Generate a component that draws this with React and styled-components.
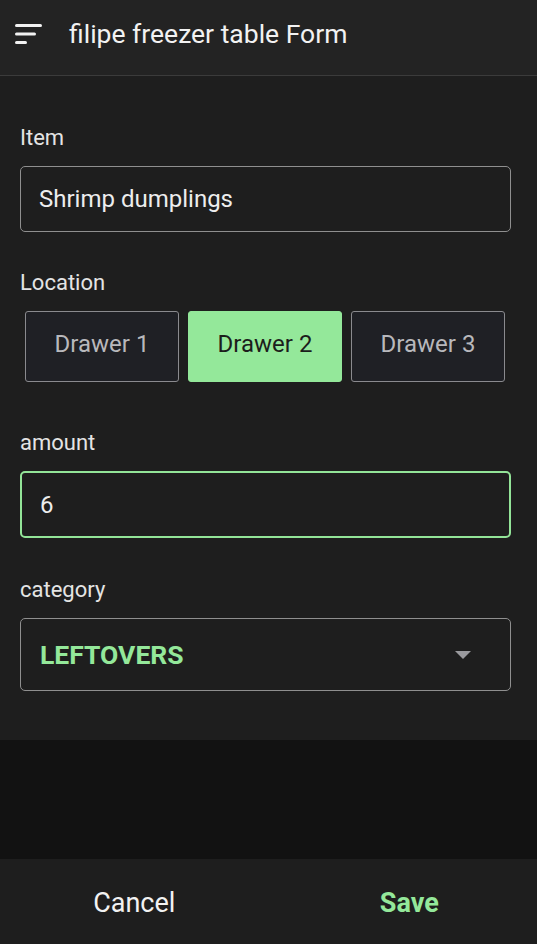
import React, { useState } from 'react';
import styled, { createGlobalStyle } from 'styled-components';

const GlobalStyle = createGlobalStyle`
  * { box-sizing: border-box; }
  html, body { margin: 0; padding: 0; background: #121212; }
  body { font-family: Roboto, "Noto Sans", sans-serif; }
`

const S_page = styled.div`
  height: 100vh;
  display: flex;
  flex-direction: column;
  background: #121212;
`
const S_header = styled.header`
  height: 76px;
  flex-shrink: 0;
  display: flex;
  align-items: center;
  gap: 26px;
  padding: 0 15px 8px 15px;
  background: #232323;
  border-bottom: solid 1px #3b3b3b;
`
const S_title = styled.h1`
  margin: 0;
  font-size: 26.5px;
  font-weight: 400;
  color: #f2f2f2;
`
const S_form = styled.form`
  display: flex;
  flex-direction: column;
  gap: 39px;
  padding: 50px 26px 49px 20px;
  background: #1e1e1e;
`
const S_field = styled.div`
  display: flex;
  flex-direction: column;
  gap: 16px;
  margin-top: ${ ({mt}) => mt || 0 }px;
`
const S_label = styled.label`
  font-size: 22px;
  line-height: 24px;
  color: #e4e4e4;
`
const S_input = styled.input`
  height: ${ ({h}) => h || 66 }px;
  width: 100%;
  padding: 0 18px;
  background: transparent;
  border: solid ${ ({focused}) => focused ? '2px #93e498' : '1px #8f8f8f' };
  border-radius: 5px;
  outline: none;
  font-family: inherit;
  font-size: 24px;
  color: #ededed;
  caret-color: #ededed;
`
const S_btnRow = styled.div`
  display: grid;
  grid-template-columns: repeat(3, 1fr);
  gap: 9px;
  padding: 0 6px 10px 5px;
`
const S_optBtn = styled.button`
  height: 71px;
  padding: 0 0 6px 0;
  border-radius: 3px;
  font-family: inherit;
  font-size: 24px;
  cursor: pointer;
  border: solid 1px ${ ({active}) => active ? '#94e89a' : '#8a8a8e' };
  background: ${ ({active}) => active ? '#94e89a' : '#1f2025' };
  color: ${ ({active}) => active ? '#1c1d1c' : '#b8b8bc' };
`
const S_select = styled.div`
  height: 73px;
  display: flex;
  align-items: center;
  justify-content: space-between;
  padding: 0 39px 0 19px;
  border: solid 1px #8f8f8f;
  border-radius: 5px;
  cursor: pointer;
`
const S_selValue = styled.span`
  font-size: 26.5px;
  font-weight: 700;
  color: #94e89a;
`
const S_filler = styled.div`
  flex: 1;
  background: #121212;
`
const S_footer = styled.footer`
  height: 85px;
  flex-shrink: 0;
  display: grid;
  grid-template-columns: 1fr 1fr;
  background: #1e1e1e;
`
const S_footBtn = styled.button`
  background: none;
  border: none;
  font-family: inherit;
  font-size: 27px;
  cursor: pointer;
  font-weight: ${ ({primary}) => primary ? 700 : 400 };
  color: ${ ({primary}) => primary ? '#94e89a' : '#f2f2f2' };
  padding: 3px 0 0 ${ ({primary}) => primary ? '13px' : '0' };
`

const SortIcon = () => (
  <svg width="28" height="22" viewBox="0 0 28 22">
    <rect x="0" y="1" width="27" height="3" rx="1.5" fill="#f2f2f2" />
    <rect x="0" y="9.5" width="21" height="3" rx="1.5" fill="#f2f2f2" />
    <rect x="0" y="18" width="12" height="3" rx="1.5" fill="#f2f2f2" />
  </svg>
)

const Caret = () => (
  <svg width="16" height="8" viewBox="0 0 16 8">
    <path d="M0 0 L16 0 L8 8 Z" fill="#9a9a9e" />
  </svg>
)

const drawers = ['Drawer 1', 'Drawer 2', 'Drawer 3'];

const App = () => {
  const [item, setItem] = useState('Shrimp dumplings');
  const [drawer, setDrawer] = useState('Drawer 2');
  const [amount, setAmount] = useState('6');

  return (
  <>
    <GlobalStyle />
    <S_page>

      <S_header>
        <SortIcon />
        <S_title>{`filipe freezer table Form`}</S_title>
      </S_header>

      <S_form onSubmit={e => e.preventDefault()}>

        <S_field>
          <S_label>{`Item`}</S_label>
          <S_input value={item} onChange={e => setItem(e.target.value)} />
        </S_field>

        <S_field>
          <S_label>{`Location`}</S_label>
          <S_btnRow>
            {drawers.map(d => (
              <S_optBtn type="button" key={d} active={d === drawer} onClick={() => setDrawer(d)}>
                {d}
              </S_optBtn>
            ))}
          </S_btnRow>
        </S_field>

        <S_field>
          <S_label>{`amount`}</S_label>
          <S_input h={67} focused autoFocus value={amount} onChange={e => setAmount(e.target.value)} />
        </S_field>

        <S_field mt={1}>
          <S_label>{`category`}</S_label>
          <S_select>
            <S_selValue>{`LEFTOVERS`}</S_selValue>
            <Caret />
          </S_select>
        </S_field>

      </S_form>

      <S_filler />

      <S_footer>
        <S_footBtn type="button">{`Cancel`}</S_footBtn>
        <S_footBtn type="button" primary>{`Save`}</S_footBtn>
      </S_footer>

    </S_page>
  </>
);

}

export default App;
